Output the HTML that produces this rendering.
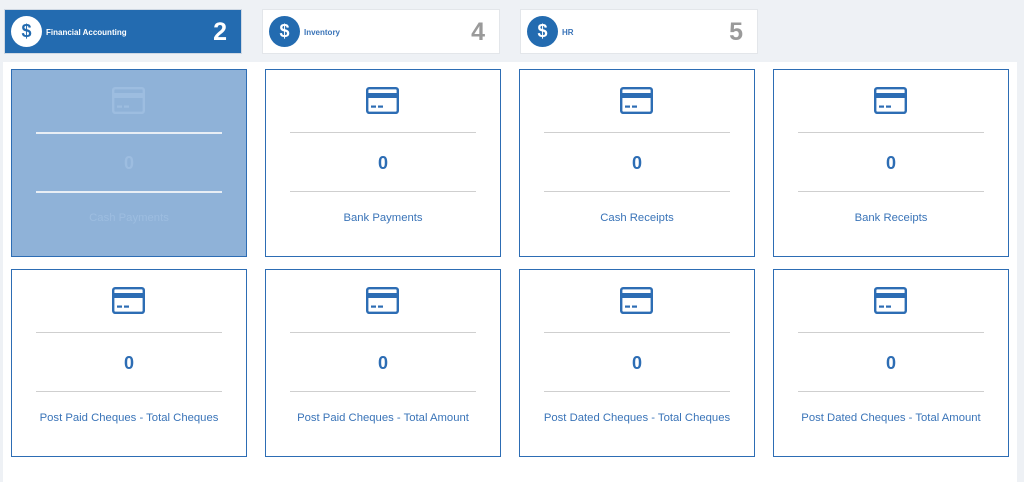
<!DOCTYPE html><html><head><style>
body{margin:0;width:1024px;height:475px;background:#eef1f5;font-family:"Liberation Sans",sans-serif;position:relative;overflow:hidden}
.t{position:absolute;top:9px;height:45px;width:238px;background:#fff;border:1px solid #e3e6ea;box-sizing:border-box}
.t.a{background:#236bb0;border-color:#cfd8e3}
.c{position:absolute;left:6px;top:6px;width:31px;height:31px;border-radius:50%;background:#236bb0;color:#fff;font-weight:bold;font-size:18px;text-align:center;line-height:31px}
.a .c{background:#fff;color:#236bb0}
.l{position:absolute;left:41px;top:18px;font-size:8px;font-weight:bold;color:#3a74b8}
.a .l{color:#fff}
.n{position:absolute;right:14px;top:8px;font-size:25px;font-weight:bold;color:#9a9a9a}
.a .n{color:#fff}
.p{position:absolute;left:3px;top:62px;width:1014px;height:420px;background:#fff}
.k{position:absolute;width:236px;height:188px;border:1.5px solid #2d6db4;box-sizing:border-box;background:#fff;text-align:center;color:#2d6db4}
.k svg{position:absolute;left:100px;top:17px}
.k .h{position:absolute;left:24px;right:24px;height:1px;background:#cfcfcf}
.k .v{position:absolute;left:0;right:0;top:83px;font-size:18px;font-weight:bold}
.k .s{position:absolute;left:0;right:0;top:142px;font-size:11.3px;color:#3a74b8}
.k.f{background:#8fb2d8;color:#9dbde0}
.k.f .h{background:#e8eef5;height:2px}
.k.f .s{color:#9dbde0}
</style></head><body>
<div class="t a" style="left:4px"><div class="c">$</div><div class="l">Financial Accounting</div><div class="n">2</div></div>
<div class="t" style="left:262px"><div class="c">$</div><div class="l">Inventory</div><div class="n">4</div></div>
<div class="t" style="left:520px"><div class="c">$</div><div class="l">HR</div><div class="n">5</div></div>
<div class="p"></div>
<svg width="0" height="0" style="position:absolute"><defs><symbol id="cc" viewBox="0 0 33 27"><rect x="1.2" y="1.2" width="30.6" height="24.6" rx="2" fill="none" stroke="currentColor" stroke-width="2.4"/><rect x="1" y="6" width="31" height="5" fill="currentColor"/><rect x="5" y="18.5" width="5" height="2.2" fill="currentColor"/><rect x="12" y="18.5" width="5" height="2.2" fill="currentColor"/></symbol></defs></svg>
<div id="g"></div>
<script>
var L=["Cash Payments","Bank Payments","Cash Receipts","Bank Receipts","Post Paid Cheques - Total Cheques","Post Paid Cheques - Total Amount","Post Dated Cheques - Total Cheques","Post Dated Cheques - Total Amount"],X=[11,265,519,773],Y=[69,269],h="";
L.forEach(function(t,i){h+='<div class="k'+(i==0?' f':'')+'" style="left:'+X[i%4]+'px;top:'+Y[i>>2]+'px"><svg width="33" height="27"><use href="#cc"/></svg><div class="h" style="top:62px"></div><div class="v">0</div><div class="h" style="top:121px"></div><div class="s">'+t+'</div></div>'});
document.getElementById("g").innerHTML=h;
</script>
</body></html>
